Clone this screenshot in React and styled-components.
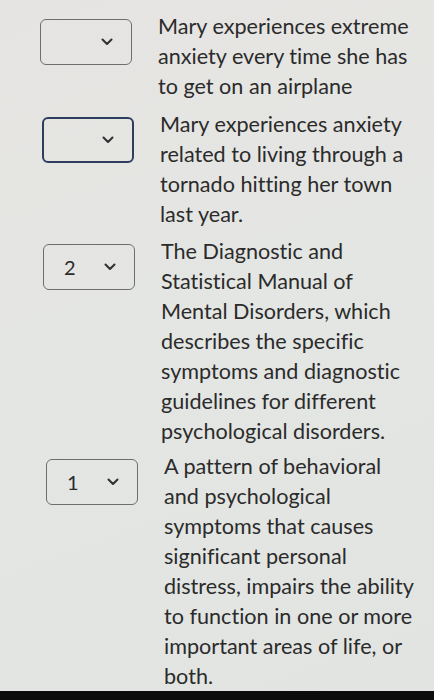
import React from "react";
import styled, { createGlobalStyle } from "styled-components";

const Global = createGlobalStyle`
  html, body { margin: 0; padding: 0; }
  body { background: #111; font-family: Lato, "Noto Sans", sans-serif; }
`;

const Page = styled.div`
  width: 434px;
  height: 700px;
  display: flex;
  flex-direction: column;
  overflow: hidden;
  background: linear-gradient(160deg, #e6e4e2 0%, #e4e6e3 45%, #e2e4e1 100%);
`;

const List = styled.div`
  flex: 1;
  display: flex;
  flex-direction: column;
  padding: 11px 0 0 0;
`;

const Row = styled.div`
  display: flex;
  align-items: flex-start;
  padding-left: ${(p) => p.$indent}px;
  margin-bottom: ${(p) => p.$gap}px;
`;

const Select = styled.div`
  box-sizing: border-box;
  width: 92px;
  height: 46px;
  margin-top: 8px;
  border: ${(p) => (p.$focus ? "2px solid #2f3d5e" : "1.5px solid #6e6e6e")};
  border-radius: 6px;
  display: flex;
  align-items: center;
  padding: 0 18px 0 20px;
  color: #2a2a2a;
  font-size: 20px;
  flex-shrink: 0;
`;

const Value = styled.span`
  flex: 1;
`;

const Chevron = () => (
  <svg width="12" height="8" viewBox="0 0 12 8" fill="none">
    <path d="M1.5 1.5 L6 6 L10.5 1.5" stroke="#333" strokeWidth="2.1" strokeLinecap="round" strokeLinejoin="round" />
  </svg>
);

const Text = styled.div`
  margin-left: 26px;
  font-size: 21.6px;
  line-height: 30px;
  color: #2b2b2b;
  font-variant-ligatures: none;
  white-space: nowrap;
`;

const Line = styled.div``;

const Bar = styled.div`
  height: 11px;
  flex-shrink: 0;
  background: #0c0c0c;
`;

const items = [
  { v: "", lines: ["Mary experiences extreme", "anxiety every time she has", "to get on an airplane"], indent: 40, gap: 8 },
  { v: "", focus: true, lines: ["Mary experiences anxiety", "related to living through a", "tornado hitting her town", "last year."], indent: 42, gap: 7 },
  { v: "2", lines: ["The Diagnostic and", "Statistical Manual of", "Mental Disorders, which", "describes the specific", "symptoms and diagnostic", "guidelines for different", "psychological disorders."], indent: 43, gap: 5 },
  { v: "1", lines: ["A pattern of behavioral", "and psychological", "symptoms that causes", "significant personal", "distress, impairs the ability", "to function in one or more", "important areas of life, or", "both."], indent: 46, gap: 0 },
];

export default function App() {
  return (
    <>
      <Global />
      <Page>
        <List>
          {items.map((it, i) => (
            <Row key={i} $indent={it.indent} $gap={it.gap}>
              <Select $focus={it.focus}>
                <Value>{it.v}</Value>
                <Chevron />
              </Select>
              <Text>
                {it.lines.map((l, j) => (
                  <Line key={j}>{l}</Line>
                ))}
              </Text>
            </Row>
          ))}
        </List>
        <Bar />
      </Page>
    </>
  );
}
